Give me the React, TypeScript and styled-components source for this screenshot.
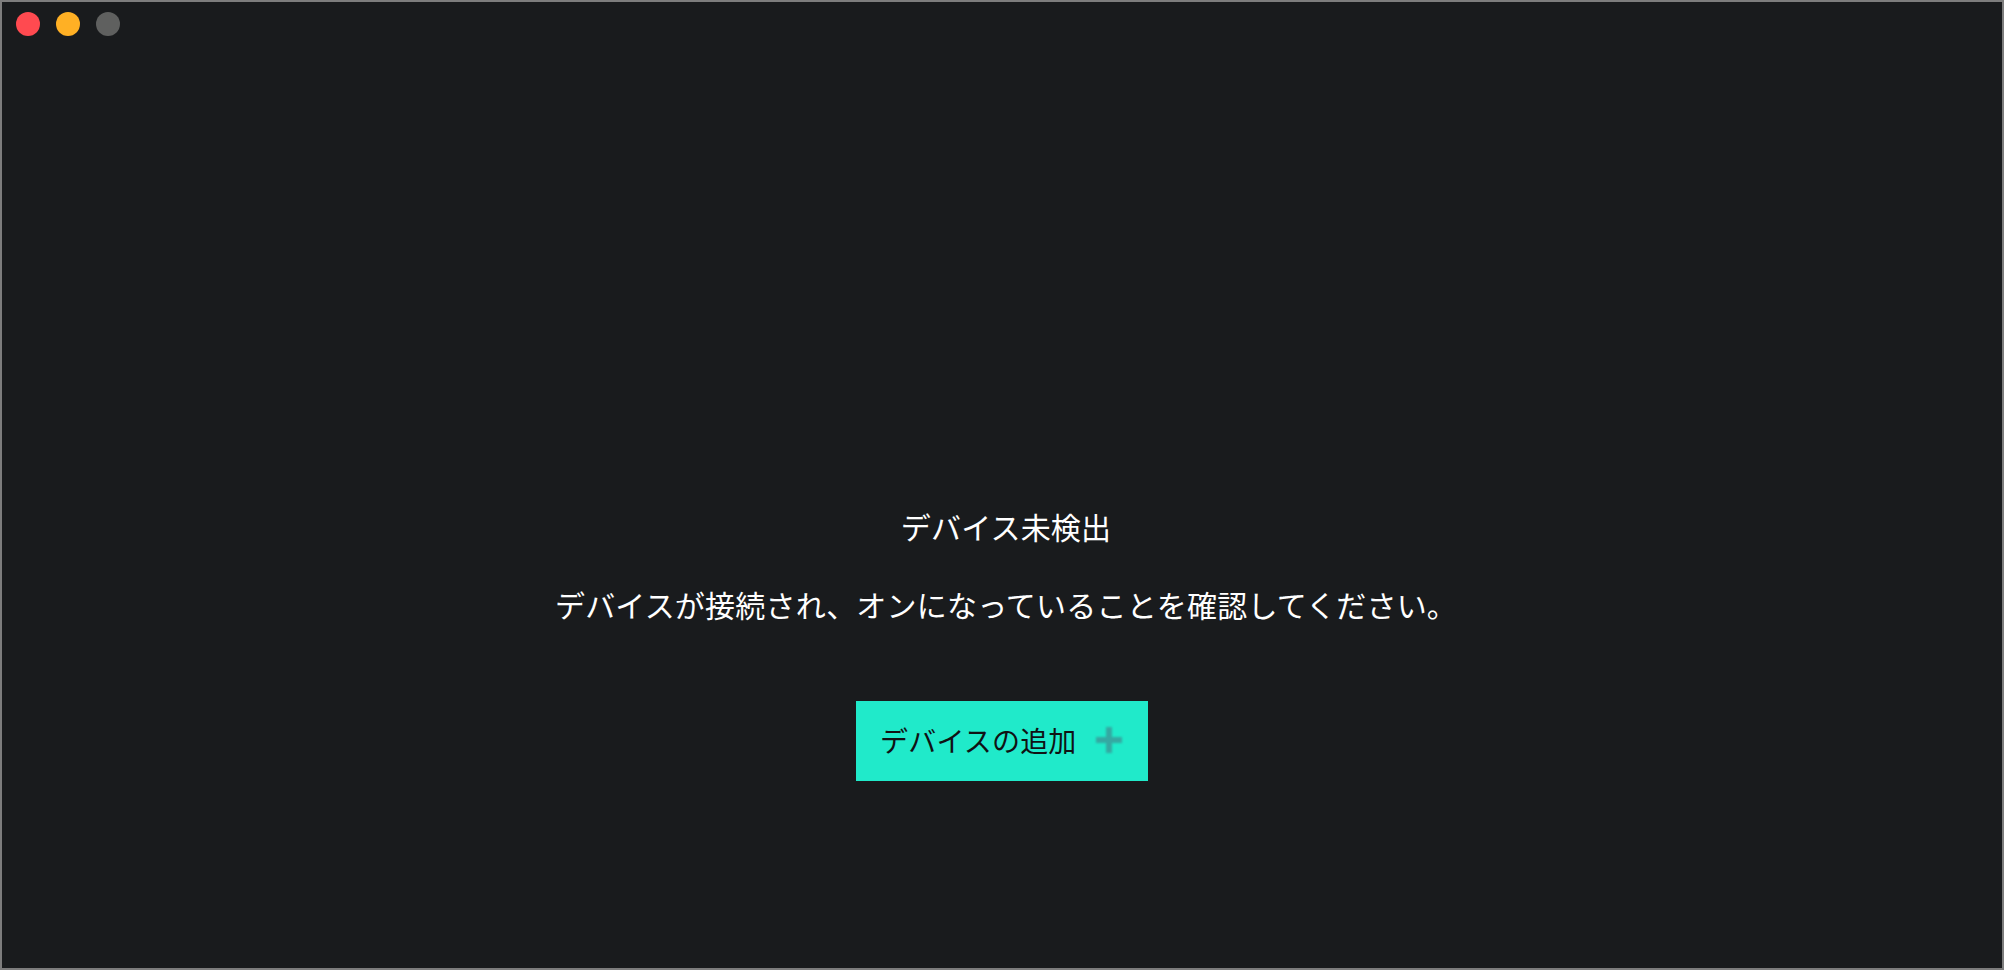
import React from "react";
import styled, { createGlobalStyle } from "styled-components";

const Global = createGlobalStyle`
  html, body { margin: 0; padding: 0; height: 100%; background: #191b1d; }
  #root { height: 100%; }
`;

const Window = styled.div`
  box-sizing: border-box;
  width: 2004px;
  height: 970px;
  border: 2px solid #7d7d7d;
  background: #191b1d;
  display: flex;
  flex-direction: column;
  font-family: "Noto Sans CJK JP", "Liberation Sans", sans-serif;
  overflow: hidden;
`;

const TitleBar = styled.div`
  display: flex;
  gap: 16px;
  padding: 10px 0 0 14px;
  height: 24px;
`;

const Light = styled.span<{ $color: string }>`
  width: 24px;
  height: 24px;
  border-radius: 50%;
  background: ${(p) => p.$color};
`;

const Content = styled.main`
  display: flex;
  flex-direction: column;
  align-items: center;
  padding-top: 468px;
`;

const Message = styled.p`
  margin: 0 0 34px;
  padding-left: 8px;
  color: #ffffff;
  font-size: 30px;
  letter-spacing: 0.2px;
  line-height: 44px;
  font-weight: 400;
  white-space: nowrap;
`;

const AddButton = styled.button`
  margin-top: 41px;
  width: 292px;
  height: 80px;
  border: 0;
  padding: 0 24px 2px;
  display: flex;
  align-items: center;
  justify-content: space-between;
  background: #20eaca;
  color: #101214;
  font-family: inherit;
  font-size: 28px;
  letter-spacing: 0.2px;
  white-space: nowrap;
`;

const PlusIcon = styled.svg`
  width: 26px;
  height: 26px;
  margin-right: 2px;
  flex: none;
  filter: blur(0.8px);
`;

export default function App() {
  return (
    <>
      <Global />
      <Window>
        <TitleBar>
          <Light $color="#ff4a50" />
          <Light $color="#ffb024" />
          <Light $color="#5f605f" />
        </TitleBar>
        <Content>
          <Message>デバイス未検出</Message>
          <Message>デバイスが接続され、オンになっていることを確認してください。</Message>
          <AddButton>
            デバイスの追加
            <PlusIcon viewBox="0 0 26 26">
              <path d="M13 0v26M0 13h26" stroke="#35a8a2" strokeWidth="6" fill="none" />
            </PlusIcon>
          </AddButton>
        </Content>
      </Window>
    </>
  );
}
